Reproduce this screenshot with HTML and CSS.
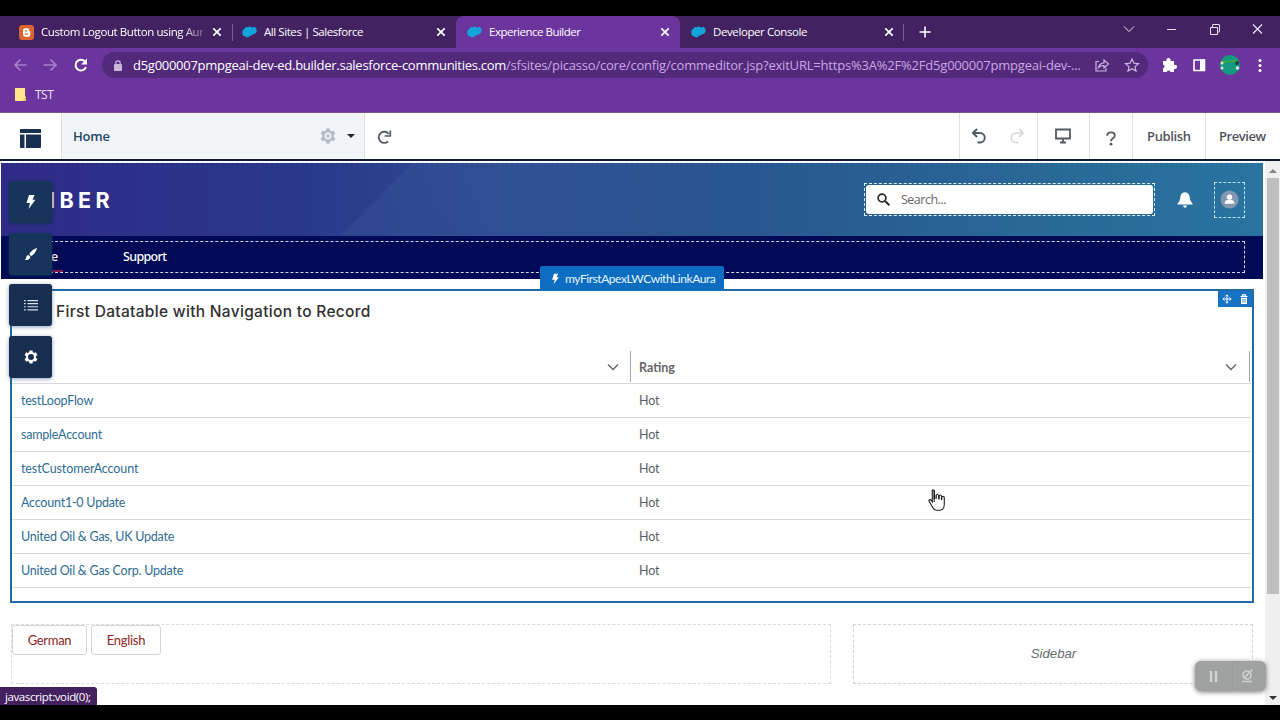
FILE: index.html
```html
<!DOCTYPE html>
<html lang="en">
<head>
<meta charset="utf-8">
<title>Experience Builder</title>
<link rel="stylesheet" href="styles.css">
</head>
<body>
<svg class="defs" width="0" height="0">
  <symbol id="cloud" viewBox="0 0 15 12"><path fill="#12a5dc" d="M3.2 10.2C1.2 10.3.2 8.800.5 7.100.0 5.300.9 3.200 2.500 3.100 2.600 1.500 4.300.500 5.800 1.500 7-.100 9 .400 9.700 2 12-.200 14.800 1.800 14.700 4.500 14.600 7 12.800 8.400 11 8.100 10.200 9.600 9 9.900 8 9.500 7 11.700 4.300 12 3.200 10.200Z"/></symbol>
  <symbol id="close" viewBox="0 0 10 10"><path d="M1.300 1.300 8.700 8.700M8.700 1.300 1.300 8.700" fill="none" stroke="#fff" stroke-width="1.700"/></symbol>
  <symbol id="bolt" viewBox="0 0 12 16"><path fill="currentColor" d="M4 1h5.500L7.500 5.800H10.500L3.500 15 5 9H1.500Z"/></symbol>
  <symbol id="chev" viewBox="0 0 12 8"><path d="m1 1.500 5 5 5-5" fill="none" stroke="#686868" stroke-width="1.500"/></symbol>
  <symbol id="gear" viewBox="0 0 16 16"><path fill="currentColor" fill-rule="evenodd" d="M6.300.500h3.400l.400 2.200 1.400.800 2.100-.800 1.700 2.900-1.700 1.500v1.800l1.700 1.500-1.700 2.900-2.100-.800-1.400.800-.400 2.200H6.300l-.400-2.200-1.400-.8-2.100.8L.700 10.400l1.700-1.500V7.100L.700 5.600l1.700-2.900 2.100.8 1.400-.8ZM8 4.600a3.400 3.400 0 1 0 0 6.800 3.400 3.400 0 0 0 0-6.800Z"/></symbol>
</svg>
<div class="screen">
  <header class="tabs">
    <div class="tab t1"><svg class="fav" viewBox="0 0 15 15"><rect width="15" height="15" rx="3" fill="#dc6530"/><path d="M4 5.500Q4 3.300 6.200 3.300H8.300Q10.300 3.300 10.300 5.500 10.300 6.500 11.300 6.700V9.500Q11.300 11.700 9 11.700H6.200Q4 11.700 4 9.500Z" fill="#fff"/><path d="M6 5.800h2M6 9.200h3" stroke="#dc6530" stroke-width="1.200"/></svg><span class="tname fade">Custom Logout Button using Aur</span><svg class="x"><use href="#close"/></svg></div>
    <div class="tab t2"><svg class="cloud"><use href="#cloud"/></svg><span class="tname">All Sites | Salesforce</span><svg class="x"><use href="#close"/></svg></div>
    <div class="tab t3"><svg class="cloud"><use href="#cloud"/></svg><span class="tname">Experience Builder</span><svg class="x"><use href="#close"/></svg></div>
    <div class="tab t4"><svg class="cloud"><use href="#cloud"/></svg><span class="tname">Developer Console</span><svg class="x"><use href="#close"/></svg></div>
    <svg class="plus" viewBox="0 0 12 12"><path d="M6 .500V11.500M.500 6H11.500" stroke="#fff" stroke-width="1.600"/></svg>
    <svg class="winctl" viewBox="0 0 146 16"><g fill="none" stroke="#eadff3" stroke-width="1"><path d="m5 5.500 5 5 5-5M48 8.500h9"/><path d="M91.500 6.500h7v7h-7zM93.500 6V4q0-.500.500-.500h6q.500 0 .500.500v6.500q0 .500-.500.500h-1"/><path stroke-width="1.300" d="m134 3.500 9 9m0-9-9 9"/></g></svg>
  </header>
  <div class="address">
    <svg class="navs" viewBox="0 0 80 18"><g fill="none" stroke="#a783cb" stroke-width="1.600"><path d="M13.500 9H2M7.500 3.500 2 9l5.500 5.500M30.500 9H43M37.500 3.500 43 9l-5.500 5.500"/></g><path d="M72 5.500A5.400 5.400 0 1 0 73 11" fill="none" stroke="#fff" stroke-width="2"/><path d="M74 2.500V8.500H68Z" fill="#fff"/></svg>
    <div class="url"><svg class="lock" viewBox="0 0 8 11"><rect y="4" width="8" height="7" rx="1" fill="#c9b9d8"/><path d="M1.800 4.500V3a2.200 2.200 0 0 1 4.400 0v1.500" fill="none" stroke="#c9b9d8" stroke-width="1.200"/></svg><span class="host">d5g000007pmpgeai-dev-ed.builder.salesforce-communities.com</span><span class="path">/sfsites/picasso/core/config/commeditor.jsp?exitURL=https%3A%2F%2Fd5g000007pmpgeai-dev-...</span>
      <svg class="share" viewBox="0 0 46 16"><g fill="none" stroke="#cdb6e2" stroke-width="1.200"><path d="M5 4.500H2v9.500h10v-3M4.500 10.500Q5.500 6 10 5.800V3l4.500 4-4.500 4V8.500Q6.500 8.300 4.500 10.500Z"/><path d="m38 2 1.900 4.200 4.500.4-3.400 3 1 4.500-4-2.400-4 2.400 1-4.500-3.400-3 4.500-.4Z"/></g></svg>
    </div>
    <svg class="exts" viewBox="0 0 108 24"><path fill="#fff" d="M1 8h3.500a2.200 2.200 0 1 1 4 0H12v4a2.100 2.100 0 1 1 0 3.700V19H8.800a2.200 2.200 0 0 0-4.200 0H1v-3.500a2.100 2.100 0 0 0 0-4Z"/><path d="M32 7h10.500v10.500H32Z" fill="none" stroke="#fff" stroke-width="1.600"/><path d="M38 6.500h5v11.500h-5Z" fill="#fff"/><circle cx="68" cy="12" r="10" fill="#139a81"/><path d="M60 7.500q8 1 15-1v3q-7-2-15 1Z" fill="#45a843"/><g fill="#dbe7cc"><circle cx="60" cy="10" r="1.500"/><circle cx="60" cy="15" r="1.500"/><circle cx="75.500" cy="15" r="1.800"/></g><circle cx="75" cy="10" r="2" fill="#17463b"/><g fill="#fff"><circle cx="98" cy="7.500" r="1.500"/><circle cx="98" cy="12.500" r="1.500"/><circle cx="98" cy="17.500" r="1.500"/></g></svg>
  </div>
  <div class="bookmarks"><svg viewBox="0 0 11 13"><path d="M0 0h10v8l1 1v4H0Z" fill="#fde68c"/><path d="M8.500 13V10.500L11 9v4Z" fill="#eac95f"/></svg><span>TST</span></div>
  <div class="builder">
    <div class="logo"><svg viewBox="0 0 21 19"><path d="M0 1q0-1 1-1h19q1 0 1 1v3H0ZM0 5.500h4.500V19H1q-1 0-1-1ZM6 5.500h15V18q0 1-1 1H6Z" fill="#172f50"/></svg></div>
    <div class="page"><span>Home</span><svg class="pgear"><use href="#gear"/><circle cx="8" cy="8" r="1.700" fill="currentColor"/></svg><i class="caret"></i></div>
    <svg class="reload" viewBox="0 0 16 16"><path d="M12.800 5A5.600 5.600 0 1 0 12 12.500" fill="none" stroke="#5a5e68" stroke-width="1.900"/><path d="M14.300 1.500v5.500H8.500" fill="none" stroke="#5a5e68" stroke-width="1.700"/></svg>
    <div class="undo"><svg viewBox="0 0 16 16"><path d="M6 1 2 5l4 4M2 5h7a4.700 4.700 0 0 1 0 9.500H6.500" fill="none" stroke="#555b64" stroke-width="2"/></svg><svg viewBox="0 0 16 16"><path d="m10 1 4 4-4 4m4-4H7a4.700 4.700 0 0 0 0 9.500h2.500" fill="none" stroke="#d8d8da" stroke-width="1.700"/></svg></div>
    <div class="desk"><svg viewBox="0 0 16 16"><path d="M1 1.500h14v9H1ZM8 11v3M5 14.500h6" fill="none" stroke="#555b64" stroke-width="1.800"/></svg></div>
    <div class="help"><svg viewBox="0 0 12 16"><path d="M2 5Q2 1.500 6 1.500T10 5Q10 6.500 8 7.800T6 11" fill="none" stroke="#555b64" stroke-width="2"/><circle cx="6" cy="14" r="1.500" fill="#555b64"/></svg></div>
    <div class="publish"><span>Publish</span></div><div class="preview"><span>Preview</span></div>
  </div>
  <main class="stage">
    <div class="site">
      <div class="hero">
        <span class="brand">IBER</span>
        <div class="search"><div class="field"><svg viewBox="0 0 13 13"><circle cx="5" cy="5" r="3.900" fill="none" stroke="#292929" stroke-width="1.700"/><path d="m8 8 4.300 4.300" stroke="#292929" stroke-width="2"/></svg><span>Search...</span></div></div>
        <svg class="bell" viewBox="0 0 16 16"><path fill="#fff" d="M8 .300Q3.500.500 3.200 6 3 9.500.500 11.500V12.500h15v-1Q13 9.500 12.800 6 12.500.500 8 .300ZM6 13.500h4Q9.500 15.800 8 15.800T6 13.500Z"/></svg>
        <div class="avatar"><svg viewBox="0 0 20 20"><circle cx="10" cy="10" r="9.500" fill="#8497b0"/><circle cx="10" cy="7.500" r="2.800" fill="#fff"/><path d="M5 14.500v-1Q5 11 8 10.500h4q3 .500 3 3v1Z" fill="#fff"/></svg></div>
      </div>
      <nav class="menu"><div class="menubox"><span class="home">e</span><span>Support</span></div></nav>
      <section class="component">
        <div class="tag"><svg><use href="#bolt"/></svg><span>myFirstApexLWCwithLinkAura</span></div>
        <div class="tools"><svg viewBox="0 0 10 10"><path d="M5 1v8M1 5h8M3.500 2.300 5 .800l1.500 1.500M3.500 7.700 5 9.200l1.500-1.500M2.300 3.500.800 5l1.500 1.500M7.700 3.500 9.200 5 7.700 6.500" fill="none" stroke="#fff"/></svg><svg viewBox="0 0 10 10"><path d="M1.500 2.500h7M3.500 2V.800h3V2" fill="none" stroke="#fff" stroke-width="1.200"/><path d="M2 3.700h6V10H2Z" fill="#fff"/><path d="M4 5v3.500M6 5v3.500" stroke="#1673c4" stroke-width=".8"/></svg></div>
        <h1><span>First Datatable with Navigation to Record</span></h1>
        <div class="thead"><div class="th1"><svg><use href="#chev"/></svg></div><div class="th2"><span>Rating</span><svg><use href="#chev"/></svg></div></div>
        <div class="row"><a>testLoopFlow</a><span>Hot</span></div>
        <div class="row"><a>sampleAccount</a><span>Hot</span></div>
        <div class="row"><a class="wide">testCustomerAccount</a><span>Hot</span></div>
        <div class="row"><a>Account1-0 Update</a><span>Hot</span></div>
        <div class="row"><a>United Oil &amp; Gas, UK Update</a><span>Hot</span></div>
        <div class="row"><a>United Oil &amp; Gas Corp. Update</a><span>Hot</span></div>
      </section>
      <section class="bottom"><div class="content"><button class="german">German</button><button class="english">English</button></div><div class="sidebar">Sidebar</div></section>
    </div>
    <div class="scroll"><i class="up"></i><div class="thumb"></div><i class="down"></i></div>
  </main>
  <aside class="dock">
    <div class="dk soft"><svg class="b"><use href="#bolt"/></svg></div>
    <div class="dk soft"><svg viewBox="0 0 16 16"><path fill="#fff" d="M15 1Q9 2.500 6 8l2 2.500Q13.500 7 15 1ZM5 9Q2.500 9 2.500 12 2.500 14 .800 14.500 5 16 7 12.500L7.200 11Z"/></svg></div>
    <div class="dk"><svg viewBox="0 0 16 14"><path d="M0 2h2M4 2h12M0 5.500h2M4 5.500h12M0 9h2M4 9h12M0 12.500h2M4 12.500h12" stroke="#dce3ea" stroke-width="1.300"/></svg></div>
    <div class="dk"><svg viewBox="0 0 16 16"><use href="#gear"/></svg></div>
  </aside>
  <div class="status">javascript:void(0);</div>
  <div class="recorder"><svg viewBox="0 0 72 30"><path d="M37.500 1v28" stroke="#989a9a"/><path d="M16 10v11M21 10v11" stroke="#d2d4d4" stroke-width="2.400"/><g fill="none" stroke="#cdd0d0" stroke-width="1.600"><circle cx="52" cy="14" r="4"/><path d="m49 17 8.500-8.500M47 20.500h10M52 13v2"/></g></svg></div>
  <svg class="cursor" viewBox="0 0 19 24"><path d="M6.500 14V3Q6.500 1.300 5.300 1.300T4.500 3V14L3.500 12.500Q2.500 11 1.200 12 .700 12.700 1.500 14L5 20Q6.500 22.800 9 22.800H13Q17 22 17.200 17V9.500Q17 8 15.800 8T14.300 9.500V11 8Q14.200 6.700 13 6.700T11.500 8V10.500 7.500Q11.300 6.200 10 6.200T8.500 7.500" fill="#fff" stroke="#222" stroke-width="1.200"/><path d="M6.700 2v9M8.600 7v4M11.600 7.500v4M14.400 9v3" stroke="#111" stroke-width="1.300"/></svg>
</div>
</body>
</html>
```

FILE: styles.css
```css
* { box-sizing: border-box; }
body { margin: 0; background: #000; font-family: "Open Sans", sans-serif; }
svg { display: block; flex: none; }
.defs { position: absolute; }
.screen { position: relative; width: 1280px; height: 720px; padding: 16px 0 15px; overflow: hidden; display: flex; flex-direction: column; background: #000; }
.tabs { height: 32px; flex: none; display: flex; align-items: center; background: #432261; color: #fff; font-size: 11.500px; }
.tab { height: 32px; display: flex; align-items: center; white-space: nowrap; }
.tab .x { width: 10px; height: 10px; margin-left: auto; }
.tname { padding-bottom: 1px; }
.t1 { width: 232px; padding: 0 10px 0 19px; }
.t2 { width: 224px; padding: 0 10px; background: linear-gradient(#79618d, #79618d) 0 50% / 1px 17px no-repeat; }
.t3 { width: 224px; padding: 0 10px 0 11px; background: #6c359d; border-radius: 8px 8px 0 0; }
.t4 { width: 224px; padding: 0 10px 0 11px; background: linear-gradient(#79618d, #79618d) 100% 50% / 1px 17px no-repeat; }
.fav { width: 15px; height: 15px; margin-right: 7px; }
.cloud { width: 15px; height: 12px; margin-right: 7px; }
.t1 .tname { letter-spacing: -.42px; }
.t2 .tname { letter-spacing: -.43px; }
.t3 .tname { letter-spacing: -.5px; }
.t4 .tname { letter-spacing: -.4px; }
.fade { mask-image: linear-gradient(90deg, #000 86%, rgba(0,0,0,.3)); }
.plus { width: 12px; height: 12px; margin-left: 15px; }
.winctl { width: 146px; height: 16px; margin: 0 15px 6px auto; }
.address { height: 34px; flex: none; display: flex; align-items: center; padding-left: 13px; background: #6c359d; }
.navs { width: 80px; height: 18px; margin-right: 9px; }
.url { width: 1046px; height: 26px; border-radius: 13px; background: #52297b; display: flex; align-items: center; padding-left: 12px; white-space: nowrap; font-size: 13px; }
.lock { width: 8px; height: 11px; margin-right: 11px; }
.host { color: #fff; width: 373px; letter-spacing: -.27px; }
.path { color: #c9a7e3; width: 575px; letter-spacing: -.2px; }
.share { width: 46px; height: 16px; margin-left: 13px; }
.exts { width: 108px; height: 24px; margin-left: 14px; }
.bookmarks { height: 31px; flex: none; display: flex; padding: 5px 15px; background: #6c359d; border-bottom: 1px solid #7a5292; color: #efe5f6; font-size: 12px; line-height: 16px; letter-spacing: -.5px; }
.bookmarks svg { width: 11px; height: 13px; margin: 1px 9px 0 0; }
.builder { height: 46px; flex: none; display: flex; align-items: stretch; background: #fff; color: #50545c; font: 600 13px "Open Sans", sans-serif; }
.builder > div { display: flex; align-items: center; }
.logo { width: 61px; padding: 4px 0 0 20px; }
.logo svg { width: 21px; height: 19px; }
.page { width: 304px; padding-left: 11px; border: 1px solid #dedfe1; border-width: 0 1px; background: #f2f5f7; color: #244765; letter-spacing: -.2px; }
.page span { width: 247px; }
.pgear { width: 16px; height: 16px; color: #b2bbc6; }
.caret { margin-left: 11px; border: 4px solid transparent; border-top: 4px solid #222; border-bottom: 0; }
.reload { width: 16px; height: 16px; margin: 16px auto 0 11px; }
.undo { width: 78px; border-left: 1px solid #dedfe1; padding-left: 11px; gap: 22px; }
.undo svg, .desk svg { width: 16px; height: 16px; }
.desk { width: 52px; border-left: 1px solid #dedfe1; padding-left: 17px; }
.help { width: 43px; border-left: 1px solid #dedfe1; padding: 4px 0 0 15px; }
.help svg { width: 12px; height: 15px; }
.publish { width: 73px; border-left: 1px solid #dedfe1; padding-left: 14px; letter-spacing: -.35px; }
.preview { width: 75px; border-left: 1px solid #dedfe1; padding-left: 13px; letter-spacing: -.45px; }
.stage { flex: 1; min-height: 0; display: flex; justify-content: space-between; background: #fff; border-top: 2px solid #101b31; }
.site { width: 1262px; margin: 1px 0 0 1px; border-top: 1px dashed #e6edf5; }
.hero { height: 73px; display: flex; align-items: center; padding-left: 48px; background: linear-gradient(135deg, transparent 30.700%, rgba(90,140,190,.1) 31%, transparent 55%), linear-gradient(90deg, #2f2a87, #29388a 23%, #2d4c91 40%, #28588f 60%, #296897 82%, #2974a0); }
.brand { width: 815px; color: #fff; font: 700 21.500px Inter, sans-serif; letter-spacing: 4.400px; }
.search { width: 291px; height: 33px; border: 1px dashed #d9edff; padding: 1px; }
.field { height: 29px; border-radius: 3px; background: #fff; display: flex; align-items: center; padding-left: 11px; color: #676767; font-size: 12.500px; letter-spacing: -.5px; }
.field svg { width: 13px; height: 13px; margin-right: 11px; }
.bell { width: 16px; height: 16px; margin-left: 22px; }
.avatar { width: 31px; height: 36px; margin-left: 21px; border: 1px dashed #bde3ef; display: grid; place-items: center; }
.avatar svg { width: 19px; height: 19px; }
.menu { height: 43px; background: #000a56; padding: 5px 18px 6px 9px; }
.menubox { height: 32px; border: 1px dashed #d2d4e8; border-left: 0; display: flex; align-items: center; padding-left: 41px; color: #fff; font: 500 12.500px "Noto Sans", sans-serif; letter-spacing: -.65px; }
.home { width: 72px; height: 30px; line-height: 29px; background: linear-gradient(#801b50, #801b50) 0 100% / 12px 2px no-repeat; }
.menubox span + span { padding-bottom: 1px; }
.component { position: relative; width: 1244px; height: 314px; margin: 10px 0 0 9px; border: 2px solid #1f6ba1; font: 12.500px Lato, sans-serif; letter-spacing: -.22px; color: #5a5e63; }
.tag { position: absolute; left: 528px; top: -25px; width: 184px; height: 25px; background: #0d6dc0; border-radius: 2px 2px 0 0; color: #e5f5ff; display: flex; align-items: center; padding-left: 11px; font: 12px Lato, sans-serif; letter-spacing: -.44px; }
.tag svg { width: 9px; height: 12px; margin-right: 5px; color: #fff; }
.tools { position: absolute; top: 0; right: 0; width: 34px; height: 16px; display: flex; align-items: center; justify-content: space-around; background: #1673c4; }
.tools svg { width: 10px; height: 10px; }
h1 { margin: 0; height: 60px; padding: 10px 0 0 44px; font: 450 15.500px/22px Inter, sans-serif; letter-spacing: .31px; color: #303030; }
.thead { height: 31px; display: flex; color: #666; font-weight: 700; }
.th1 { width: 619px; border-right: 1px solid #a7a7a7; display: flex; align-items: center; justify-content: flex-end; padding-right: 11px; }
.th2 { width: 619px; display: flex; align-items: center; justify-content: space-between; padding: 1px 12px 0 8px; border-right: 1px solid #aaa; letter-spacing: 0; }
.thead svg { width: 12px; height: 8px; }
.row { height: 34.100px; display: flex; align-items: center; padding: 0 0 1px 9px; border-top: 1px solid #d8d9dc; margin-right: 1px; }
.thead + .row { margin-top: 1px; }
.row:last-child { border-bottom: 1px solid #d8d9dc; height: 35px; }
.row a { width: 618px; color: #2e6c92; }
.row a.wide { letter-spacing: -.1px; }
.bottom { display: flex; gap: 22px; margin: 21px 0 0 10px; height: 60px; }
.content { width: 820px; border: 1px dashed #dadada; display: flex; gap: 4px; align-items: flex-start; }
.content button { height: 30px; padding: 0; border: 1px solid #d6d3d4; border-radius: 3px; background: #fff; font: 13px Lato, sans-serif; letter-spacing: -.3px; color: #8d2525; }
.german { width: 75px; }
.english { width: 70px; }
.sidebar { width: 400px; border: 1px dashed #d3d3d3; display: grid; place-items: center; padding: 0 0 1px 1px; font: italic 13.200px "Liberation Sans", sans-serif; color: #666a6d; }
.scroll { width: 15px; display: flex; flex-direction: column; align-items: center; background: #f0f0f0; }
.up { margin: 8px 0 5px; border: 4px solid transparent; border-top: 0; border-bottom-color: #858585; }
.thumb { width: 12px; height: 416px; background: #bfbfbf; }
.down { margin: auto 0 5px; border: 4px solid transparent; border-bottom: 0; border-top-color: #333; }
.dock { position: absolute; left: 9px; top: 181px; display: grid; gap: 9.500px; }
.dk { width: 43px; height: 42px; display: grid; place-items: center; background: #172e51; color: #fff; border-radius: 3px; box-shadow: 0 1px 4px #40648a99; }
.soft { background: #17345a; box-shadow: 0 1px 3px #122e5b; }
.dk svg { width: 14px; height: 14px; }
.dk svg.b { width: 12px; height: 16px; }
.status { position: absolute; left: 0; top: 687px; width: 97px; height: 18px; padding-left: 5px; background: #43215f; border-radius: 0 3px 0 0; color: #fff; font: 11.500px/20px "Open Sans", sans-serif; letter-spacing: -.4px; white-space: nowrap; }
.recorder { position: absolute; left: 1195px; top: 661px; width: 71px; height: 30px; border-radius: 6px; background: #a0a2a2; box-shadow: 0 1px 5px #777; }
.recorder svg { width: 72px; height: 30px; }
.cursor { position: absolute; left: 928px; top: 488px; width: 18px; height: 24px; }
```
